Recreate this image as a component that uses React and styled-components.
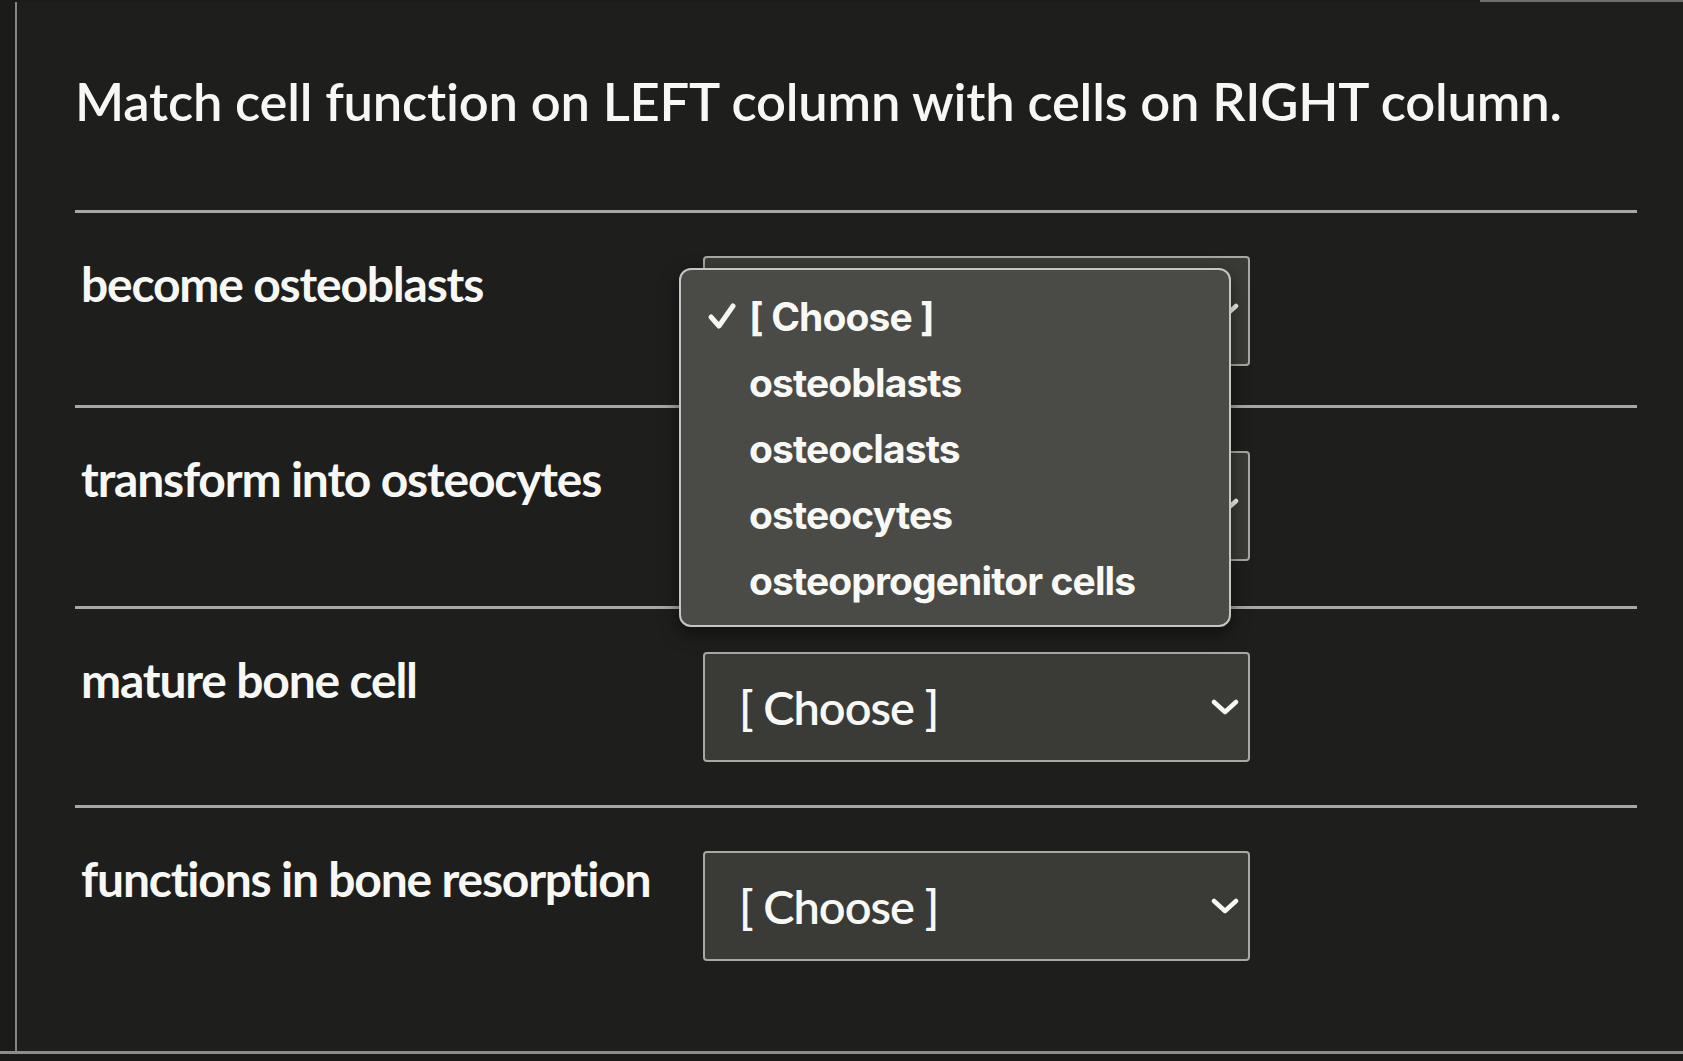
import React from "react";
import styled, { createGlobalStyle } from "styled-components";

const GlobalStyle = createGlobalStyle`
  html, body {
    margin: 0;
    padding: 0;
    background: #1b1b1a;
  }
  * {
    box-sizing: border-box;
  }
`;

// the first two selects sit under the open list, so their text can't be seen
const rows = [
  { label: "become osteoblasts", h: 195, open: true, covered: true },
  { label: "transform into osteocytes", h: 201, covered: true },
  { label: "mature bone cell", h: 199 },
  { label: "functions in bone resorption", h: 247 },
];

const options = [
  "[ Choose ]",
  "osteoblasts",
  "osteoclasts",
  "osteocytes",
  "osteoprogenitor cells",
];

const Chevron = () => (
  <svg width="28" height="18" viewBox="0 0 28 18">
    <polyline
      points="3,4 14,14 25,4"
      fill="none"
      stroke="#f6f6f2"
      strokeWidth="4.5"
      strokeLinecap="round"
      strokeLinejoin="round"
    />
  </svg>
);

const Check = () => (
  <svg width="30" height="28" viewBox="0 0 30 28">
    <polyline
      points="4,15 12,24 26,4"
      fill="none"
      stroke="#f6f6f2"
      strokeWidth="5"
      strokeLinecap="round"
      strokeLinejoin="round"
    />
  </svg>
);

const App = () => {
  return (
    <Page>
      <GlobalStyle />
      <TopEdge />
      <Panel>
        <Title>Match cell function on LEFT column with cells on RIGHT column.</Title>
        <List>
          {rows.map((row) => (
            <Row key={row.label} $h={row.h}>
              <Label>{row.label}</Label>
              <SelectWrap>
                <Select>
                  <span>{row.covered ? "" : "[ Choose ]"}</span>
                  <Chevron />
                </Select>
                {row.open && (
                  <Popup>
                    {options.map((opt, i) => (
                      <Option key={opt}>
                        <CheckSlot>{i === 0 && <Check />}</CheckSlot>
                        {opt}
                      </Option>
                    ))}
                  </Popup>
                )}
              </SelectWrap>
            </Row>
          ))}
        </List>
      </Panel>
      <Footer />
    </Page>
  );
};

const Page = styled.div`
  height: 1061px;
  overflow: hidden;
  background: #1b1b1a;
  color: #f6f6f2;
`;

const TopEdge = styled.div`
  height: 2px;
  margin-left: 1480px;
  background: #6f706b;
`;

const Panel = styled.div`
  margin-left: 15px;
  height: 1049px;
  border-left: 2px solid #85867f;
  padding: 0 46px 0 58px;
  background: #1e1e1d;
`;

const Title = styled.h1`
  margin: 0;
  height: 208px;
  padding-top: 68px;
  font-family: Lato, "Liberation Sans", sans-serif;
  font-weight: 600;
  font-size: 52.5px;
  line-height: 62px;
  letter-spacing: -0.2px;
  white-space: nowrap;
  color: #f7f7f3;
`;

const List = styled.div`
  display: flex;
  flex-direction: column;
`;

const Row = styled.div`
  display: grid;
  grid-template-columns: 628px 547px;
  align-items: start;
  height: ${(p) => p.$h}px;
  padding-top: 43px;
  border-top: 3px solid #a6a8a1;
  position: relative;
`;

const Label = styled.div`
  padding: 0 0 0 6px;
  font-family: Lato, "Liberation Sans", sans-serif;
  font-weight: 700;
  font-size: 48px;
  line-height: 56px;
  letter-spacing: -1.2px;
  white-space: nowrap;
  color: #f7f7f3;
`;

const SelectWrap = styled.div`
  position: relative;
`;

const Select = styled.div`
  display: flex;
  align-items: center;
  justify-content: space-between;
  height: 110px;
  padding: 0 9px 0 34px;
  border: 2px solid #a6a8a1;
  border-radius: 4px;
  background: #3a3a37;
  font-family: Lato, "Liberation Sans", sans-serif;
  font-weight: 600;
  font-size: 47px;
  letter-spacing: -1px;
  color: #f7f7f3;
`;

const Popup = styled.div`
  position: absolute;
  top: 12px;
  left: -24px;
  width: 552px;
  padding: 13px 0 12px;
  border: 2px solid #c4c6bf;
  border-radius: 12px;
  background: #4a4a47;
  box-shadow: 0 6px 18px rgba(0, 0, 0, 0.5);
  z-index: 2;
`;

const Option = styled.div`
  display: flex;
  align-items: center;
  height: 66px;
  padding-left: 26px;
  font-family: Inter, "Liberation Sans", sans-serif;
  font-weight: 700;
  font-size: 39px;
  letter-spacing: -0.9px;
  color: #f8f8f4;
`;

const CheckSlot = styled.span`
  display: inline-flex;
  width: 42px;
  justify-content: flex-start;
`;

const Footer = styled.div`
  border-top: 3px solid #8e8f89;
  height: 10px;
  background: #1b1b1a;
`;

export default App;
